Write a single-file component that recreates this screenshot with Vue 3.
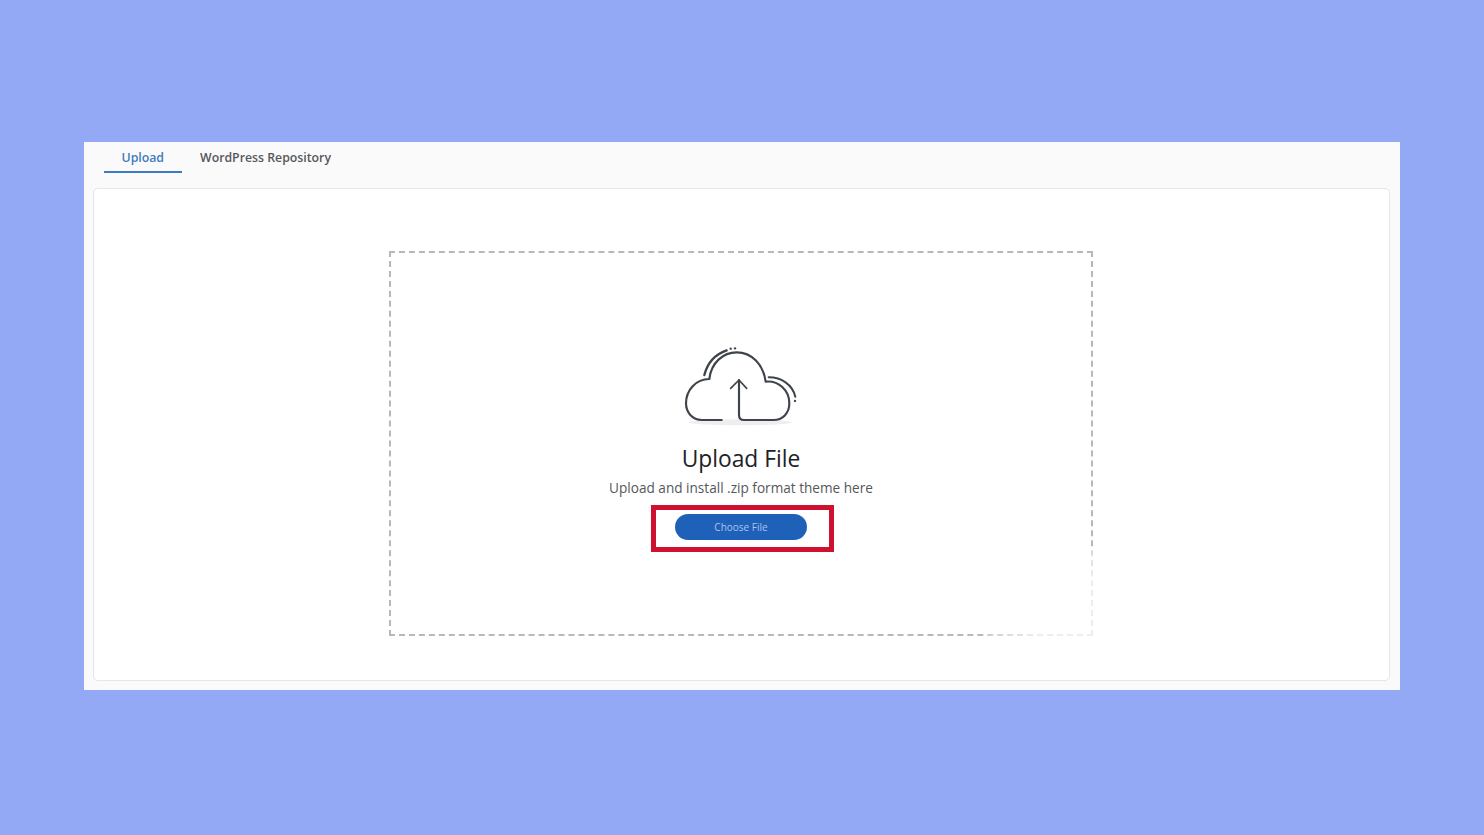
<template>
  <div class="page">
    <div class="panel">
      <!-- tabs -->
      <div class="tabs">
        <span class="tab active">Upload</span>
        <span class="tab">WordPress Repository</span>
      </div>

      <div class="card">
        <div class="dropzone">
          <svg class="cloud" viewBox="0 0 480 300" fill="none" stroke="#3f444c" stroke-linecap="round" stroke-linejoin="round">
            <ellipse cx="240" cy="262" rx="155" ry="9" fill="#eeeeee" stroke="none" />
            <path stroke-width="6.5" d="M185 255H125C97 255 78 232 78 205C78 165 108 132 148 132C154 82 190 52 230 52C275 52 310 88 317 140C355 136 388 165 388 205C388 235 368 255 340 255H252C242 255 237 250 237 240V135" />
            <path stroke-width="5" d="M212 160L237 135L260 160" />
            <path stroke-width="7" d="M133 120C142 85 165 58 200 46" />
            <path stroke-width="6" d="M326 127C365 127 398 150 406 185" />
            <circle cx="212" cy="41" r="3.5" fill="#3f444c" stroke="none" />
            <circle cx="225" cy="40" r="3.5" fill="#3f444c" stroke="none" />
            <circle cx="405" cy="198" r="3.5" fill="#3f444c" stroke="none" />
          </svg>
          <h2 class="title">Upload File</h2>
          <p class="subtitle">Upload and install .zip format theme here</p>
          <div class="highlight">
            <button class="choose-btn">Choose File</button>
          </div>
        </div>
      </div>
    </div>
  </div>
</template>

<script setup>
</script>

<style>
html, body {
  margin: 0;
  background: #94a9f6;
}
</style>

<style scoped>
.page {
  height: 835px;
  box-sizing: border-box;
  padding: 142px 84px 0;
  background: #94a9f6;
  font-family: "Open Sans", "Liberation Sans", sans-serif;
  overflow: hidden;
}

.panel {
  height: 548px;
  box-sizing: border-box;
  padding: 0 10px 9px 9px;
  background: #fafafa;
  display: flex;
  flex-direction: column;
}

.tabs {
  height: 31px;
  padding-left: 11px;
  display: flex;
  gap: 1px;
  margin-bottom: 15px;
}

.tab {
  height: 29px;
  line-height: 31px;
  padding: 0 17.5px;
  font-size: 12.3px;
  font-weight: 600;
  color: #55575b;
}

.tab.active {
  color: #3d7cc0;
  border-bottom: 2px solid #3d7cc0;
}

.card {
  flex: 1;
  background: #fff;
  border: 1px solid #e6e6e6;
  border-radius: 5px;
  padding: 62px 296px 44px 295px;
  display: flex;
}

.dropzone {
  position: relative;
  flex: 1;
  box-sizing: border-box;
  border: 2.5px dashed #b8b8b8;
  display: flex;
  flex-direction: column;
  align-items: center;
  padding-top: 81.5px;
}

/* the dashes fade out towards the bottom right corner */
.dropzone::after {
  content: "";
  position: absolute;
  right: -3px;
  bottom: -3px;
  width: 110px;
  height: 90px;
  background: linear-gradient(135deg, rgba(255, 255, 255, 0) 30%, rgba(255, 255, 255, 0.75) 70%);
  pointer-events: none;
}

.cloud {
  width: 160px;
  height: 100px;
  margin-right: 3px;
}

.title {
  margin: 7px 0 0;
  font-size: 22.8px;
  line-height: 34px;
  font-weight: 400;
  color: #202225;
}

.subtitle {
  margin: 1px 0 0;
  font-size: 13.6px;
  line-height: 22px;
  color: #55575b;
}

.highlight {
  margin-top: 6px;
  margin-left: 2px;
  width: 183px;
  height: 47px;
  box-sizing: border-box;
  border: 5.5px solid #cf1130;
  display: flex;
  align-items: center;
  justify-content: center;
}

.choose-btn {
  width: 132px;
  height: 26px;
  margin-left: -2px;
  margin-top: -2px;
  border: none;
  border-radius: 13px;
  background: #1f60b8;
  color: #a9c6ea;
  font-family: inherit;
  font-size: 10px;
  padding: 0;
}
</style>
